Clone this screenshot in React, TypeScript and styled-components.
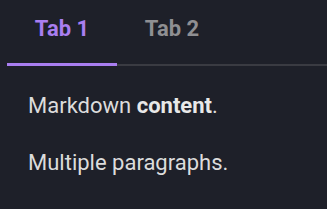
import React, { useState } from "react";
import styled, { createGlobalStyle } from "styled-components";

const Global = createGlobalStyle`
  html, body {
    margin: 0;
    padding: 0;
    background: #1e2029;
  }
  body {
    font-family: Roboto, "Noto Sans", sans-serif;
  }
`;

const Page = styled.div`
  padding: 16px 0 0 7px;
  min-height: 209px;
  box-sizing: border-box;
  background: #1e2029;
`;

const TabList = styled.div`
  display: flex;
  border-bottom: 2px solid #3a3b42;
`;

const Tab = styled.button<{ $active: boolean }>`
  position: relative;
  width: 110px;
  padding: 0 0 22px;
  margin: 0;
  border: none;
  background: none;
  font-family: Roboto, sans-serif;
  font-size: 22px;
  line-height: 26px;
  font-weight: 700;
  color: ${(p) => (p.$active ? "#a97ef0" : "#8f8f92")};
  cursor: pointer;
  text-align: center;

  &::after {
    content: "";
    position: absolute;
    left: 0;
    right: 0;
    bottom: -2px;
    height: 3px;
    background: ${(p) => (p.$active ? "#a97ef0" : "transparent")};
  }
`;

const Panel = styled.div`
  padding: 23px 0 0 21px;
`;

const Para = styled.p`
  margin: 0 0 24px;
  font-size: 22px;
  line-height: 33px;
  color: #dcdcdc;

  strong {
    font-weight: 700;
    color: #e8e8e8;
  }
`;

export default function App() {
  const [active, setActive] = useState(0);
  return (
    <>
      <Global />
      <Page>
        <TabList>
          {["Tab 1", "Tab 2"].map((t, i) => (
            <Tab key={t} $active={active === i} onClick={() => setActive(i)}>
              {t}
            </Tab>
          ))}
        </TabList>
        <Panel>
          {active === 0 ? (
            <>
              <Para>
                Markdown <strong>content</strong>.
              </Para>
              <Para>Multiple paragraphs.</Para>
            </>
          ) : (
            <Para>Second tab content.</Para>
          )}
        </Panel>
      </Page>
    </>
  );
}
